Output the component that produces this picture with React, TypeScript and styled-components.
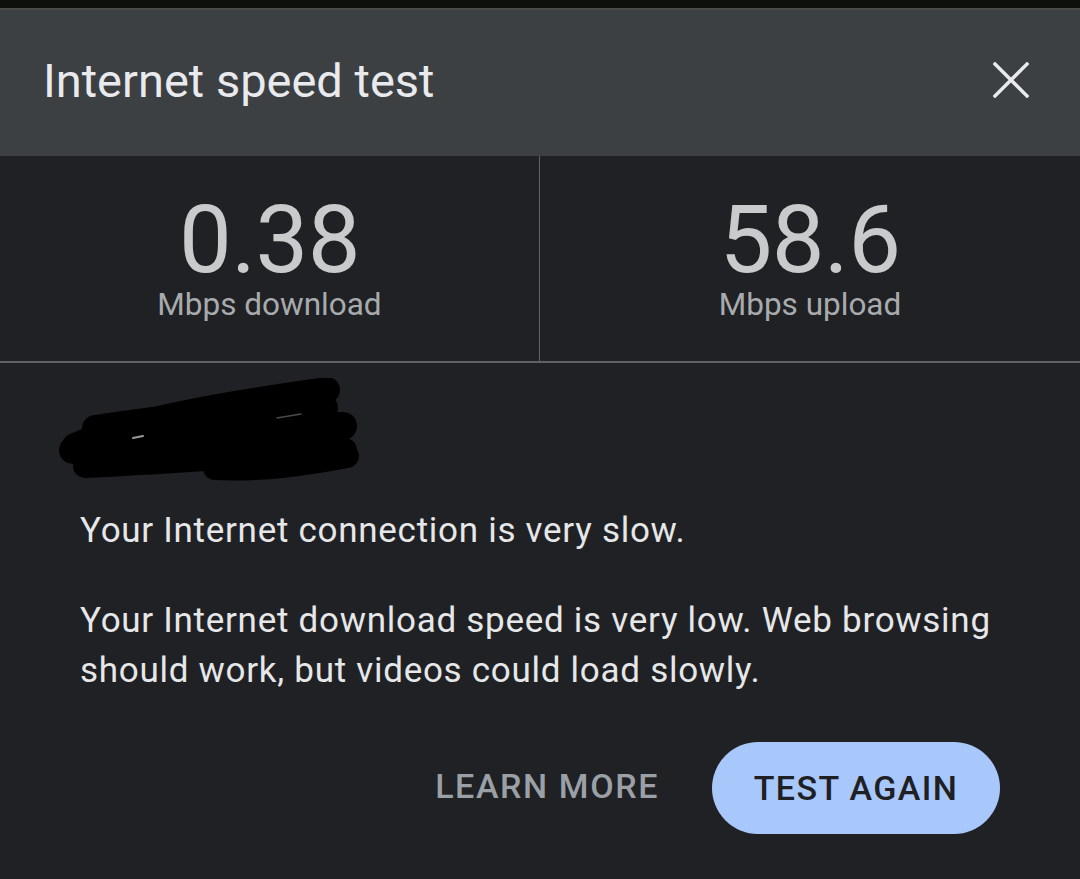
import styled, { createGlobalStyle } from "styled-components";

const GlobalStyle = createGlobalStyle`
  html, body {
    margin: 0;
    padding: 0;
    background: #202124;
  }

  body {
    font-family: Roboto, "Noto Sans", "Liberation Sans", sans-serif;
  }
`;

const stats = [
  { value: "0.38", label: "Mbps download" },
  { value: "58.6", label: "Mbps upload" },
];

export default function App() {
  return (
    <>
      <GlobalStyle />
      <Page>
        <StatusStrip />
        <Header>
          <Title>Internet speed test</Title>
          <CloseButton aria-label="Close">
            <svg width="36" height="36" viewBox="0 0 36 36">
              <path
                d="M2 2 L34 34 M34 2 L2 34"
                stroke="#e8eaed"
                strokeWidth="3.4"
                strokeLinecap="square"
              />
            </svg>
          </CloseButton>
        </Header>

        <StatsRow>
          {stats.map((s) => (
            <StatCell key={s.label}>
              <StatValue>{s.value}</StatValue>
              <StatLabel>{s.label}</StatLabel>
            </StatCell>
          ))}
        </StatsRow>

        <Body>
          <Redaction viewBox="0 0 310 110" width="310" height="110">
            <g
              stroke="#000"
              strokeLinecap="round"
              strokeLinejoin="round"
              fill="none"
            >
              <path d="M20 68 C80 40, 180 25, 272 12" strokeWidth="26" />
              <path d="M40 50 C120 38, 200 30, 270 30" strokeWidth="26" />
              <path d="M18 72 C110 62, 210 52, 288 48" strokeWidth="28" />
              <path d="M30 88 C120 84, 220 76, 290 72" strokeWidth="24" />
              <path d="M160 90 C210 92, 250 86, 292 78" strokeWidth="24" />
            </g>
            <path
              d="M78 60 L88 58"
              stroke="#9a9a9a"
              strokeWidth="2"
              strokeLinecap="round"
            />
            <path
              d="M222 40 L246 36"
              stroke="#4a4a4a"
              strokeWidth="1.5"
              strokeLinecap="round"
            />
          </Redaction>

          <Paragraph>Your Internet connection is very slow.</Paragraph>
          <Paragraph $spaced>
            Your Internet download speed is very low. Web browsing should work,
            but videos could load slowly.
          </Paragraph>

          <Actions>
            <TextButton>LEARN MORE</TextButton>
            <PillButton>TEST AGAIN</PillButton>
          </Actions>
        </Body>
      </Page>
    </>
  );
}

const Page = styled.div`
  width: 1080px;
  height: 879px;
  background: #202124;
  overflow: hidden;
  display: flex;
  flex-direction: column;
`;

const StatusStrip = styled.div`
  height: 8px;
  background: #0e100b;
  border-bottom: 2px solid #4a4c49;
`;

const Header = styled.header`
  height: 146px;
  background: #3c4043;
  display: flex;
  align-items: center;
  justify-content: space-between;
  padding: 0 51px 0 43px;
`;

const Title = styled.h1`
  margin: 0 0 6px;
  font-size: 47px;
  font-weight: 400;
  color: #e8eaed;
  letter-spacing: 0;
`;

const CloseButton = styled.button`
  background: none;
  border: none;
  padding: 0;
  margin-top: -6px;
  display: flex;
  cursor: pointer;
`;

const StatsRow = styled.div`
  display: grid;
  grid-template-columns: 1fr 1fr;
  height: 205px;
  border-bottom: 2px solid #5f6368;
`;

const StatCell = styled.div`
  display: flex;
  flex-direction: column;
  align-items: center;
  padding-top: 40px;

  &:first-child {
    border-right: 1px solid #5f6368;
  }
`;

const StatValue = styled.div`
  font-size: 94px;
  line-height: 88px;
  color: #c8cacb;
  letter-spacing: -0.6px;
`;

const StatLabel = styled.div`
  margin-top: 2px;
  font-size: 31.5px;
  line-height: 1.2;
  color: #a8abae;
`;

const Body = styled.div`
  display: flex;
  flex-direction: column;
  padding: 15px 80px 0 80px;
`;

const Redaction = styled.svg`
  display: block;
  margin-left: -25px;
`;

const Paragraph = styled.p<{ $spaced?: boolean }>`
  margin: ${(p) => (p.$spaced ? "40px" : "18px")} 0 0;
  font-size: 35px;
  line-height: 50px;
  letter-spacing: 0.72px;
  color: #e6e7e9;
`;

const Actions = styled.div`
  display: flex;
  justify-content: flex-end;
  align-items: center;
  gap: 53px;
  margin-top: 46px;
`;

const TextButton = styled.button`
  background: none;
  border: none;
  padding: 0;
  font-family: inherit;
  font-size: 34px;
  font-weight: 500;
  color: #9aa0a6;
  letter-spacing: 1.6px;
  margin-top: -4px;
  cursor: pointer;
`;

const PillButton = styled.button`
  height: 92px;
  width: 288px;
  border: none;
  border-radius: 46px;
  background: #a8c7fa;
  font-family: inherit;
  font-size: 34px;
  font-weight: 500;
  color: #1f2023;
  letter-spacing: 1.4px;
  cursor: pointer;
`;
